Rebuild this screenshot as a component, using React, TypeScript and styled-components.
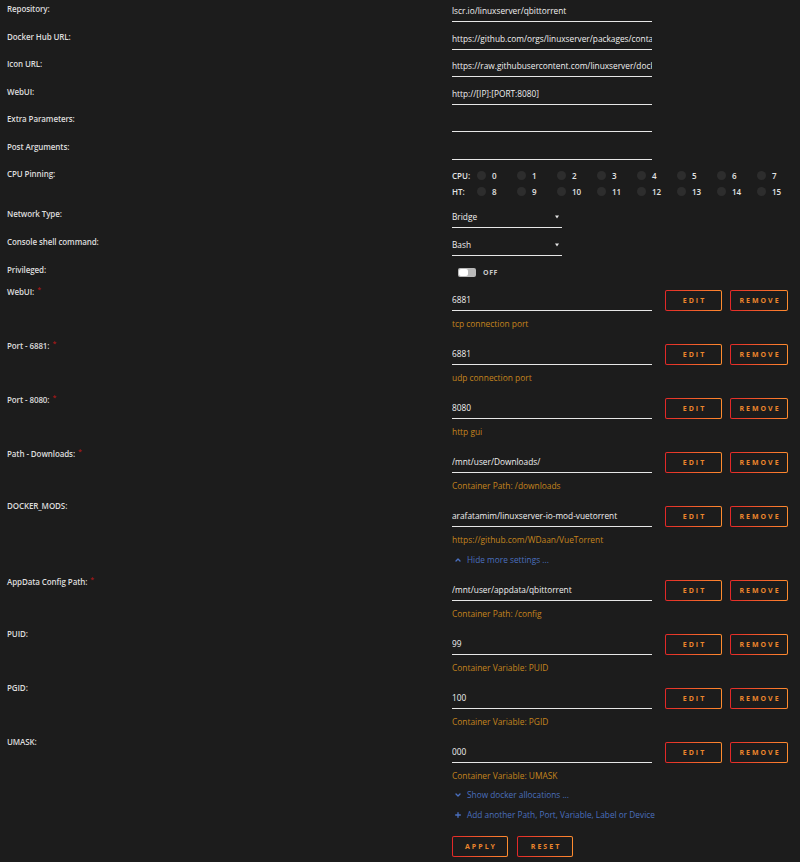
import React from 'react';
import styled, { createGlobalStyle } from 'styled-components';
import { ChevronUp, ChevronDown, Plus } from 'lucide-react';

const GlobalStyle = createGlobalStyle`
  html, body {
    margin: 0;
    padding: 0;
    background: #1c1c1c;
  }
  body {
    font-family: 'Open Sans', 'Noto Sans', sans-serif;
    color: #e4e4e4;
  }
`;

// Layout
const Page = styled.div`
  width: 800px;
  min-height: 862px;
  background: #1c1c1c;
  padding-left: 7px;
  box-sizing: border-box;
  overflow: hidden;
`;

const Row = styled.div<{ $h: number; $top?: number }>`
  display: grid;
  grid-template-columns: 445px 1fr;
  height: ${(p) => p.$h}px;
  padding-top: ${(p) => p.$top || 0}px;
  box-sizing: border-box;
`;

const Label = styled.div<{ $pt?: number }>`
  font-size: 8px;
  font-weight: 600;
  line-height: 12px;
  color: #dcdcdc;
  padding-top: ${(p) => p.$pt || 0}px;
  white-space: nowrap;
  letter-spacing: -0.1px;
`;

const Req = styled.span`
  color: #a01818;
  font-size: 7px;
  vertical-align: 3px;
  margin-left: 3px;
`;

const TextInput = styled.input`
  display: block;
  width: 200px;
  height: 22px;
  box-sizing: border-box;
  padding: 0;
  margin: 0;
  background: transparent;
  border: none;
  border-bottom: 1px solid #e6e6e6;
  color: #f0f0f0;
  font-family: 'Open Sans', 'Noto Sans', sans-serif;
  font-size: 8.3px;
  line-height: 21px;
  outline: none;
`;

const EntryInput = styled(TextInput)`
  height: 21px;
  line-height: 20px;
`;

const Select = styled.div`
  width: 110px;
  height: 22px;
  box-sizing: border-box;
  border-bottom: 1px solid #e6e6e6;
  display: flex;
  align-items: center;
  justify-content: space-between;
  font-size: 8.3px;
  color: #f0f0f0;
  padding-right: 3px;
`;

const Arrow = styled.svg`
  width: 4px;
  height: 4px;
  margin-top: 1px;
`;

// CPU pinning
const CpuGrid = styled.div`
  display: grid;
  grid-template-columns: 25px repeat(8, 40px);
  grid-auto-rows: 16px;
  align-items: center;
  font-size: 8px;
  font-weight: 600;
  color: #e4e4e4;
`;

const Cpu = styled.div`
  display: flex;
  align-items: center;
  gap: 6px;
`;

const Dot = styled.span`
  width: 9px;
  height: 9px;
  border-radius: 50%;
  background: #2d2d2d;
`;

// Toggle
const SwitchRow = styled.div`
  display: flex;
  align-items: center;
  gap: 7px;
  padding: 0 0 0 6px;
`;

const Track = styled.div`
  width: 18px;
  height: 9px;
  border-radius: 2px;
  background: #b9b9b9;
  padding: 1px;
  box-sizing: border-box;
`;

const Knob = styled.div`
  width: 9px;
  height: 7px;
  border-radius: 2px;
  background: #ffffff;
`;

const SwitchText = styled.span`
  font-size: 7px;
  font-weight: 700;
  letter-spacing: 0.6px;
  color: #c8c8c8;
  line-height: 12px;
`;

// Entries
const Entry = styled.div`
  display: grid;
  grid-template-columns: 445px 1fr;
`;

const EntryBody = styled.div`
  padding-top: 6px;
  padding-bottom: 8px;
`;

const InputLine = styled.div`
  display: flex;
  align-items: flex-start;
`;

const Buttons = styled.div`
  display: flex;
  gap: 8px;
  margin-left: 13px;
`;

const GradButton = styled.button<{ $w: number }>`
  width: ${(p) => p.$w}px;
  height: 21px;
  box-sizing: border-box;
  padding: 0 0 0 2px;
  margin: 0;
  border: 1px solid transparent;
  border-radius: 2px;
  background:
    linear-gradient(#1c1c1c, #1c1c1c) padding-box,
    linear-gradient(90deg, #e22828, #ff8c2f) border-box;
  color: #ec862c;
  font-family: 'Open Sans', 'Noto Sans', sans-serif;
  font-size: 7px;
  font-weight: 700;
  letter-spacing: 2px;
  cursor: pointer;
`;

const Desc = styled.div`
  margin-top: 7px;
  font-size: 8.4px;
  line-height: 12px;
  color: #c4841c;
  white-space: nowrap;
`;

const Link = styled.div<{ $mt: number }>`
  margin-top: ${(p) => p.$mt}px;
  display: flex;
  align-items: center;
  gap: 5px;
  padding-left: 2px;
  font-size: 8.3px;
  line-height: 12px;
  color: #4a6fbe;
  white-space: nowrap;
`;

const Actions = styled.div`
  display: flex;
  gap: 9px;
  margin-top: 15px;
`;

const simpleRows: [string, string][] = [
  ['Repository:', 'lscr.io/linuxserver/qbittorrent'],
  ['Docker Hub URL:', 'https://github.com/orgs/linuxserver/packages/container/package/qbittorrent'],
  ['Icon URL:', 'https://raw.githubusercontent.com/linuxserver/docker-templates/master/linuxserver.io/img/qbittorrent-logo.png'],
  ['WebUI:', 'http://[IP]:[PORT:8080]'],
  ['Extra Parameters:', ''],
  ['Post Arguments:', ''],
];

interface EntryData {
  label: string;
  value: string;
  desc: string;
  required?: boolean;
}

const entries: EntryData[] = [
  { label: 'WebUI:', value: '6881', desc: 'tcp connection port', required: true },
  { label: 'Port - 6881:', value: '6881', desc: 'udp connection port', required: true },
  { label: 'Port - 8080:', value: '8080', desc: 'http gui', required: true },
  { label: 'Path - Downloads:', value: '/mnt/user/Downloads/', desc: 'Container Path: /downloads', required: true },
  { label: 'DOCKER_MODS:', value: 'arafatamim/linuxserver-io-mod-vuetorrent', desc: 'https://github.com/WDaan/VueTorrent' },
];

const moreEntries: EntryData[] = [
  { label: 'AppData Config Path:', value: '/mnt/user/appdata/qbittorrent', desc: 'Container Path: /config', required: true },
  { label: 'PUID:', value: '99', desc: 'Container Variable: PUID' },
  { label: 'PGID:', value: '100', desc: 'Container Variable: PGID' },
];

const DownArrow = () => (
  <Arrow viewBox="0 0 4 4">
    <path d="M0 0.5 H4 L2 3.5 Z" fill="#e6e6e6" />
  </Arrow>
);

const EntryRow: React.FC<{ e: EntryData; children?: React.ReactNode }> = ({ e, children }) => (
  <Entry>
    <Label>
      {e.label}
      {e.required && <Req>*</Req>}
    </Label>
    <EntryBody>
      <InputLine>
        <EntryInput defaultValue={e.value} readOnly />
        <Buttons>
          <GradButton $w={57}>EDIT</GradButton>
          <GradButton $w={58}>REMOVE</GradButton>
        </Buttons>
      </InputLine>
      <Desc>{e.desc}</Desc>
      {children}
    </EntryBody>
  </Entry>
);

export default function App() {
  return (
    <Page>
      <GlobalStyle />
      {simpleRows.map(([label, value]) => (
        <Row key={label} $h={27.6}>
          <Label $pt={3}>{label}</Label>
          <TextInput defaultValue={value} readOnly />
        </Row>
      ))}

      <Row $h={34.4} $top={2.4}>
        <Label>CPU Pinning:</Label>
        <CpuGrid>
          <span>CPU:</span>
          {[0, 1, 2, 3, 4, 5, 6, 7].map((n) => (
            <Cpu key={n}>
              <Dot />
              {n}
            </Cpu>
          ))}
          <span>HT:</span>
          {[8, 9, 10, 11, 12, 13, 14, 15].map((n) => (
            <Cpu key={n}>
              <Dot />
              {n}
            </Cpu>
          ))}
        </CpuGrid>
      </Row>

      <Row $h={28} $top={6}>
        <Label $pt={2}>Network Type:</Label>
        <Select>
          Bridge
          <DownArrow />
        </Select>
      </Row>
      <Row $h={28} $top={6}>
        <Label $pt={2}>Console shell command:</Label>
        <Select>
          Bash
          <DownArrow />
        </Select>
      </Row>
      <Row $h={28} $top={6}>
        <Label $pt={2}>Privileged:</Label>
        <SwitchRow>
          <Track>
            <Knob />
          </Track>
          <SwitchText>OFF</SwitchText>
        </SwitchRow>
      </Row>

      {entries.slice(0, 4).map((e) => (
        <EntryRow key={e.label} e={e} />
      ))}
      <EntryRow e={entries[4]}>
        <Link $mt={8}>
          <ChevronUp size={8} strokeWidth={4} />
          Hide more settings ...
        </Link>
      </EntryRow>
      {moreEntries.map((e) => (
        <EntryRow key={e.label} e={e} />
      ))}
      <EntryRow e={{ label: 'UMASK:', value: '000', desc: 'Container Variable: UMASK' }}>
        <Link $mt={7}>
          <ChevronDown size={8} strokeWidth={4} />
          Show docker allocations ...
        </Link>
        <Link $mt={8}>
          <Plus size={8} strokeWidth={4} />
          Add another Path, Port, Variable, Label or Device
        </Link>
        <Actions>
          <GradButton $w={56}>APPLY</GradButton>
          <GradButton $w={56}>RESET</GradButton>
        </Actions>
      </EntryRow>
    </Page>
  );
}
